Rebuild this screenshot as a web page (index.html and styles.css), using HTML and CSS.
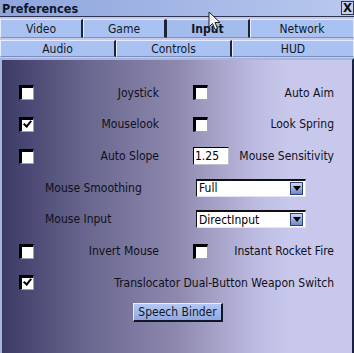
FILE: index.html
```html
<!DOCTYPE html>
<html>
<head>
<meta charset="utf-8">
<link rel="stylesheet" href="styles.css">
</head>
<body>
<div class="window">
  <div class="titlebar">
    <span class="title">Preferences</span>
    <span class="close">X</span>
  </div>
  <div class="tabs row1">
    <div class="tab t-video">Video</div>
    <div class="tab t-game">Game</div>
    <div class="tab t-input active">Input</div>
    <div class="tab t-network">Network</div>
  </div>
  <div class="tabs row2">
    <div class="tab t-audio">Audio</div>
    <div class="tab t-controls">Controls</div>
    <div class="tab t-hud">HUD</div>
  </div>
  <div class="panel">
    <div class="grid">
      <div class="cell"><span class="cb"></span><span class="lbl">Joystick</span></div>
      <div class="cell right"><span class="cb"></span><span class="lbl">Auto Aim</span></div>

      <div class="cell"><span class="cb checked"></span><span class="lbl">Mouselook</span></div>
      <div class="cell right"><span class="cb"></span><span class="lbl">Look Spring</span></div>

      <div class="cell"><span class="cb"></span><span class="lbl">Auto Slope</span></div>
      <div class="cell right"><span class="edit">1.25</span><span class="lbl">Mouse Sensitivity</span></div>

      <div class="cell"><span class="lbl-left">Mouse Smoothing</span></div>
      <div class="cell right"><span class="combo"><span class="combo-text">Full</span><span class="combo-btn"></span></span></div>

      <div class="cell"><span class="lbl-left">Mouse Input</span></div>
      <div class="cell right"><span class="combo"><span class="combo-text">DirectInput</span><span class="combo-btn"></span></span></div>

      <div class="cell"><span class="cb"></span><span class="lbl">Invert Mouse</span></div>
      <div class="cell right"><span class="cb"></span><span class="lbl">Instant Rocket Fire</span></div>

      <div class="cell wide"><span class="cb checked"></span><span class="lbl">Translocator Dual-Button Weapon Switch</span></div>
    </div>
    <div class="btnrow"><span class="button">Speech Binder</span></div>
  </div>
  <svg class="cursor" width="14" height="20" viewBox="0 0 14 20">
    <path d="M1 1 L1 16 L4.5 12.5 L7 18.5 L9.5 17.5 L7 11.5 L12 11.5 Z" fill="#f4f4f4" stroke="#202020" stroke-width="1"/>
  </svg>
</div>
</body>
</html>
```

FILE: styles.css
```css
html, body {
  margin: 0;
  padding: 0;
}
body {
  width: 354px;
  height: 353px;
  overflow: hidden;
  font-family: "DejaVu Sans Condensed", "DejaVu Sans", sans-serif;
  font-size: 12px;
  color: #10101a;
}
.window {
  position: relative;
  width: 354px;
  height: 353px;
  display: flex;
  flex-direction: column;
  background: #c8c8ec;
}
.titlebar {
  height: 17px;
  flex: none;
  display: flex;
  align-items: center;
  justify-content: space-between;
  background: linear-gradient(to right, #8ea4dc, #b8c8ee);
  border-bottom: 1px solid #2c3450;
  box-sizing: border-box;
}
.title {
  font-weight: bold;
  font-size: 12.5px;
  padding-left: 2px;
  color: #101828;
}
.close {
  font-weight: bold;
  font-size: 13px;
  line-height: 12px;
  width: 11px;
  height: 12px;
  text-align: center;
  border: 1px solid #30384c;
  background: #c4d0ee;
  color: #101010;
}
.tabs {
  display: flex;
  flex: none;
  margin-top: 2px;
}
.tab {
  box-sizing: border-box;
  height: 19px;
  display: flex;
  align-items: center;
  justify-content: center;
  background: #a9c2f2;
  border-top: 1px solid #e4ecff;
  border-left: 1px solid #e4ecff;
  border-right: 2px solid #1c2438;
  border-bottom: 1px solid #7c90c0;
  font-size: 12px;
  color: #101828;
}
.row2 .tab {
  height: 17px;
}
.t-video { width: 83px; }
.t-game { width: 83px; }
.t-input { width: 84px; }
.t-network { flex: 1; border-right: 1px solid #e4ecff; }
.tab.active {
  font-weight: bold;
  background: #a4bcec;
  border-left: 1px solid #1c2438;
}
.t-audio { width: 116px; }
.t-controls { width: 116px; }
.t-hud { flex: 1; border-right: 1px solid #e4ecff; }
.panel {
  flex: 1;
  margin-top: 1px;
  border-top: 2px solid #a6b6e0;
  border-left: 2px solid #a6b6e0;
  border-right: 2px solid #1c2040;
  background: linear-gradient(to right, #3c3b66 0%, #6a6890 25%, #8e88ae 50%, #bcbae0 72%, #c8c8ec 82%, #c8c8ec 100%);
  padding-top: 17px;
  box-sizing: border-box;
}
.grid {
  display: grid;
  grid-template-columns: 175px 175px;
  grid-auto-rows: 31.67px;
}
.cell {
  display: flex;
  align-items: center;
  padding-left: 17px;
  padding-right: 18px;
}
.cell.right {
  padding-left: 16px;
  padding-right: 18px;
}
.cell.wide {
  grid-column: 1 / 3;
}
.lbl {
  margin-left: auto;
}
.lbl-left {
  padding-left: 26px;
}
.cb {
  width: 15px;
  height: 15px;
  box-sizing: border-box;
  background: #fff;
  border-top: 3px solid #000;
  border-left: 3px solid #000;
  border-right: 1px solid #a0a0b0;
  border-bottom: 1px solid #a0a0b0;
  position: relative;
  flex: none;
}
.cb.checked::after {
  content: "";
  position: absolute;
  width: 3px;
  height: 6px;
  border-right: 2px solid #000;
  border-bottom: 2px solid #000;
  transform: rotate(40deg);
  left: 3px;
  top: -1px;
}
.edit {
  box-sizing: border-box;
  width: 36px;
  height: 18px;
  background: #fff;
  border-top: 1px solid #000;
  border-left: 1px solid #000;
  border-right: 1px solid #c0c0d0;
  border-bottom: 1px solid #c0c0d0;
  display: flex;
  align-items: center;
  padding-left: 1px;
  color: #000;
}
.combo {
  box-sizing: border-box;
  width: 110px;
  height: 18px;
  margin-left: 3px;
  background: #fff;
  border-top: 2px solid #101010;
  border-left: 1px solid #101010;
  border-bottom: 1px solid #e0e4f4;
  border-right: 1px solid #e0e4f4;
  display: flex;
  align-items: center;
  color: #000;
}
.combo-text {
  flex: 1;
  padding-left: 2px;
}
.combo-btn {
  width: 13px;
  height: 13px;
  margin-right: 2px;
  background: linear-gradient(#c8d8f8, #6c88c8);
  border: 1px solid #304070;
  box-sizing: border-box;
  position: relative;
}
.combo-btn::after {
  content: "";
  position: absolute;
  left: 2px;
  top: 3px;
  border-left: 4px solid transparent;
  border-right: 4px solid transparent;
  border-top: 5px solid #000;
}
.btnrow {
  display: flex;
  justify-content: center;
  padding-top: 4px;
  padding-left: 2px;
}
.button {
  box-sizing: border-box;
  height: 19px;
  padding: 0 4px;
  display: flex;
  align-items: center;
  background: linear-gradient(#b4c8f4, #90a8e0);
  border-top: 1px solid #e8f0ff;
  border-left: 1px solid #e8f0ff;
  border-right: 2px solid #101828;
  border-bottom: 2px solid #101828;
  color: #101828;
}
.cursor {
  position: absolute;
  left: 208px;
  top: 11px;
}
```
